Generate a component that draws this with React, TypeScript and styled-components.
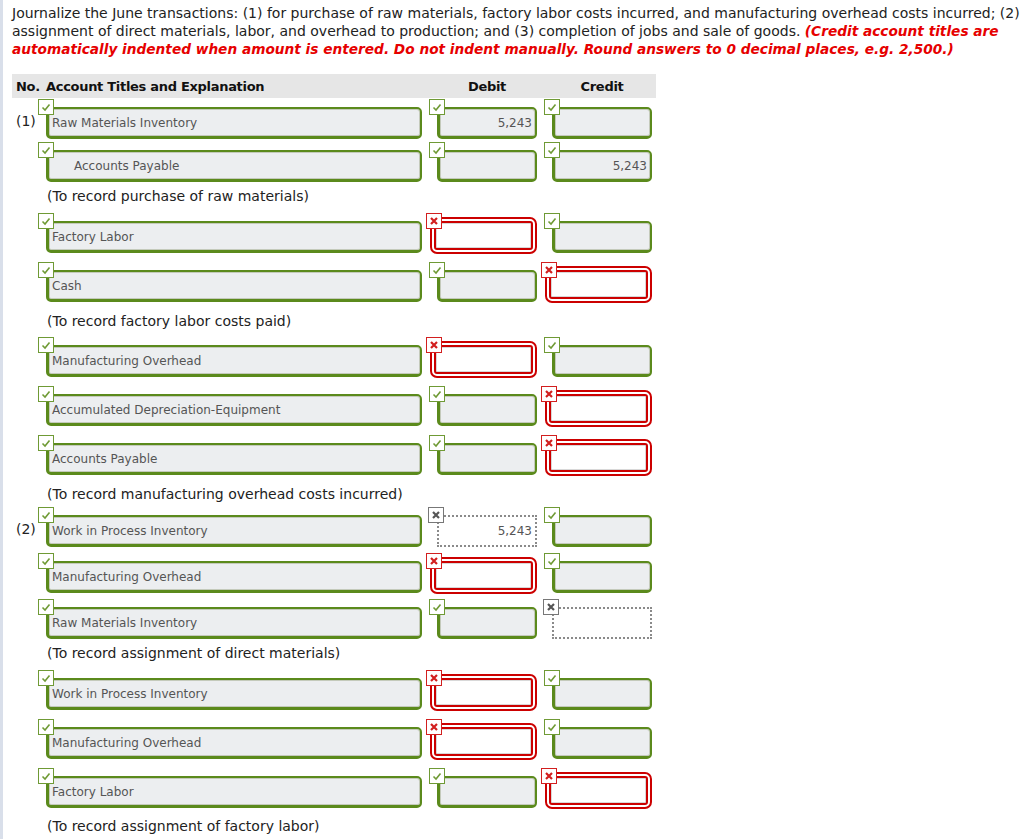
import styled, { createGlobalStyle, css } from "styled-components";

const GlobalStyle = createGlobalStyle`
  html, body {
    margin: 0;
    padding: 0;
    background: #fff;
  }
  body {
    font-family: "DejaVu Sans", Verdana, sans-serif;
    color: #1a1a1a;
  }
`;

type Status = "ok" | "bad" | "none";

const Page = styled.div`
  border-left: 3px solid #d9dfea;
  min-height: 839px;
  box-sizing: border-box;
  padding: 4px 0 0 9px;
`;

const Instructions = styled.p`
  margin: 0;
  font-size: 14px;
  line-height: 18px;
  white-space: nowrap;
  color: #222;
`;

const Hint = styled.em`
  color: #e60000;
  font-weight: bold;
  font-size: 13.7px;
`;

const Journal = styled.div`
  margin-top: 16px;
  width: 644px;
`;

const HeaderBar = styled.div`
  display: flex;
  align-items: center;
  height: 24px;
  background: #e6e6e6;
  font-size: 13px;
  letter-spacing: -0.3px;
  font-weight: bold;
  color: #111;
`;

const HeaderNo = styled.span`
  width: 30px;
  padding-left: 4px;
`;

const HeaderTitle = styled.span`
  width: 376px;
`;

const HeaderAmount = styled.span`
  width: 100px;
  margin-left: 15px;
  text-align: center;
`;

const Row = styled.div<{ $mt: number }>`
  display: flex;
  align-items: flex-start;
  height: 32px;
  margin-top: ${(p) => p.$mt}px;
`;

const EntryNo = styled.span`
  width: 34px;
  box-sizing: border-box;
  padding: 5px 0 0 4px;
  font-size: 14px;
  line-height: 18px;
  color: #222;
`;

const Cell = styled.div<{ $w: number; $status: Status; $ml?: number }>`
  position: relative;
  box-sizing: border-box;
  width: ${(p) => p.$w}px;
  height: 32px;
  margin-left: ${(p) => p.$ml ?? 0}px;
  display: flex;
  align-items: center;
  font-size: 12px;
  color: #555;
  ${(p) =>
    p.$status === "ok" &&
    css`
      background: #eceef0;
      border: 3px solid #5b8a1c;
      border-top-width: 2px;
      border-right-width: 2px;
      border-radius: 5px;
      box-shadow: inset 0 0 0 1px #c4cabb;
    `}
  ${(p) =>
    p.$status === "bad" &&
    css`
      background: #fff;
      border: 6px double #cc0000;
      border-radius: 7px;
      height: 37px;
      width: ${p.$w + 7}px;
      margin-top: -4px;
      margin-left: ${(p.$ml ?? 0) - 7}px;
      box-shadow: inset 0 0 0 1px #d8d8d8;
    `}
  ${(p) =>
    p.$status === "none" &&
    css`
      background: #fff;
      border: 2px dotted #8a8a8a;
    `}
`;

const CellText = styled.span<{ $indent?: boolean; $right?: boolean }>`
  flex: 1;
  padding-left: ${(p) => (p.$indent ? 25 : 3)}px;
  padding-right: 3px;
  text-align: ${(p) => (p.$right ? "right" : "left")};
  white-space: nowrap;
`;

const Mark = styled.span<{ $status: Status }>`
  position: absolute;
  top: -10px;
  left: -11px;
  width: 14px;
  height: 14px;
  background: #fff;
  border: 1px solid
    ${(p) =>
      p.$status === "ok" ? "#6f9a35" : p.$status === "bad" ? "#d21f1f" : "#777"};
  display: flex;
  align-items: center;
  justify-content: center;
  z-index: 1;
  ${(p) =>
    p.$status === "bad" &&
    css`
      top: -10px;
      left: -10px;
    `}
`;

const Memo = styled.div<{ $mt: number }>`
  margin-top: ${(p) => p.$mt}px;
  padding-left: 35px;
  font-size: 14px;
  line-height: 18px;
  color: #222;
`;

function MarkIcon({ status }: { status: Status }) {
  if (status === "ok") {
    return (
      <svg width="10" height="10" viewBox="0 0 10 10">
        <polyline
          points="1.5,5.5 4,8 8.5,2.5"
          fill="none"
          stroke="#6f9a35"
          strokeWidth="1.6"
        />
      </svg>
    );
  }
  const color = status === "bad" ? "#d21f1f" : "#555";
  return (
    <svg width="10" height="10" viewBox="0 0 10 10">
      <path d="M2 2 L8 8 M8 2 L2 8" stroke={color} strokeWidth="2.2" />
    </svg>
  );
}

type Field = { text?: string; status: Status };

type Line = {
  kind: "row";
  mt: number;
  no?: string;
  account: string;
  indent?: boolean;
  debit: Field;
  credit: Field;
};

type MemoLine = { kind: "memo"; mt: number; text: string };

const ok: Field = { status: "ok" };
const bad: Field = { status: "bad" };
const none: Field = { status: "none" };

const lines: (Line | MemoLine)[] = [
  { kind: "row", mt: 9, no: "(1)", account: "Raw Materials Inventory", debit: { text: "5,243", status: "ok" }, credit: ok },
  { kind: "row", mt: 11, account: "Accounts Payable", indent: true, debit: ok, credit: { text: "5,243", status: "ok" } },
  { kind: "memo", mt: 5, text: "(To record purchase of raw materials)" },
  { kind: "row", mt: 16, account: "Factory Labor", debit: bad, credit: ok },
  { kind: "row", mt: 17, account: "Cash", debit: ok, credit: bad },
  { kind: "memo", mt: 10, text: "(To record factory labor costs paid)" },
  { kind: "row", mt: 15, account: "Manufacturing Overhead", debit: bad, credit: ok },
  { kind: "row", mt: 17, account: "Accumulated Depreciation-Equipment", debit: ok, credit: bad },
  { kind: "row", mt: 17, account: "Accounts Payable", debit: ok, credit: bad },
  { kind: "memo", mt: 10, text: "(To record manufacturing overhead costs incurred)" },
  { kind: "row", mt: 12, no: "(2)", account: "Work in Process Inventory", debit: { text: "5,243", status: "none" }, credit: ok },
  { kind: "row", mt: 14, account: "Manufacturing Overhead", debit: bad, credit: ok },
  { kind: "row", mt: 14, account: "Raw Materials Inventory", debit: ok, credit: none },
  { kind: "memo", mt: 5, text: "(To record assignment of direct materials)" },
  { kind: "row", mt: 16, account: "Work in Process Inventory", debit: bad, credit: ok },
  { kind: "row", mt: 17, account: "Manufacturing Overhead", debit: bad, credit: ok },
  { kind: "row", mt: 17, account: "Factory Labor", debit: ok, credit: bad },
  { kind: "memo", mt: 9, text: "(To record assignment of factory labor)" },
];

function AmountCell({ field }: { field: Field }) {
  return (
    <Cell $w={100} $ml={15} $status={field.status}>
      <Mark $status={field.status}>
        <MarkIcon status={field.status} />
      </Mark>
      <CellText $right>{field.text}</CellText>
    </Cell>
  );
}

export default function App() {
  return (
    <>
      <GlobalStyle />
      <Page>
        <Instructions>
          Journalize the June transactions: (1) for purchase of raw materials, factory labor costs incurred, and manufacturing overhead costs incurred; (2)
          <br />
          assignment of direct materials, labor, and overhead to production; and (3) completion of jobs and sale of goods.{" "}
          <Hint>(Credit account titles are</Hint>
          <br />
          <Hint>
            automatically indented when amount is entered. Do not indent manually. Round answers to 0 decimal places, e.g. 2,500.)
          </Hint>
        </Instructions>
        <Journal>
          <HeaderBar>
            <HeaderNo>No.</HeaderNo>
            <HeaderTitle>Account Titles and Explanation</HeaderTitle>
            <HeaderAmount>Debit</HeaderAmount>
            <HeaderAmount>Credit</HeaderAmount>
          </HeaderBar>
          {lines.map((line, i) =>
            line.kind === "memo" ? (
              <Memo key={i} $mt={line.mt}>
                {line.text}
              </Memo>
            ) : (
              <Row key={i} $mt={line.mt}>
                <EntryNo>{line.no}</EntryNo>
                <Cell $w={376} $status="ok">
                  <Mark $status="ok">
                    <MarkIcon status="ok" />
                  </Mark>
                  <CellText $indent={line.indent}>{line.account}</CellText>
                </Cell>
                <AmountCell field={line.debit} />
                <AmountCell field={line.credit} />
              </Row>
            )
          )}
        </Journal>
      </Page>
    </>
  );
}
